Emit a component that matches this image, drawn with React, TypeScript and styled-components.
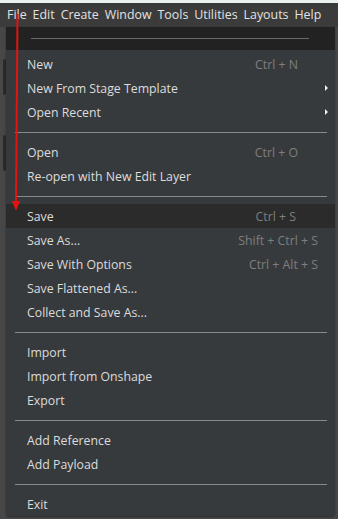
import React from "react";
import styled, { createGlobalStyle } from "styled-components";

const Global = createGlobalStyle`
  html, body { margin: 0; padding: 0; background: #3e3e3e; }
  body { font-family: "Open Sans", "Noto Sans", sans-serif; }
`;

const Screen = styled.div`
  position: relative;
  width: 338px;
  height: 519px;
  overflow: hidden;
  background: #454545;
  display: flex;
  flex-direction: column;
`;

const TopStrip = styled.div`
  height: 3px;
  background: #e9f1f1;
`;

const MenuBar = styled.div`
  height: 24px;
  background: #3b3b3b;
  display: flex;
  align-items: center;
  padding-left: 7px;
  gap: 6px;
  font-size: 12.4px;
  color: #e2e2e2;
`;

const BarItem = styled.span`
  line-height: 24px;
`;

const Workspace = styled.div`
  flex: 1;
  display: flex;
  background: #474747;
`;

const Gutter = styled.div`
  width: 6px;
  display: flex;
  flex-direction: column;
  gap: 40px;
  padding-top: 32px;
  align-items: flex-end;
`;

const Grip = styled.div`
  width: 3px;
  height: 36px;
  border-radius: 2px;
  background: #2a2a2a;
`;

const Popup = styled.div`
  position: absolute;
  left: 6px;
  top: 27px;
  width: 329px;
  height: 489px;
  background: #373a3d;
  border-radius: 0 0 4px 4px;
  display: flex;
  flex-direction: column;
  font-size: 12.3px;
  color: #dcdcdc;
  box-shadow: 0 1px 2px rgba(0, 0, 0, 0.4);
`;

const TearOff = styled.div`
  height: 23px;
  background: #222222;
  display: flex;
  align-items: center;
  padding: 0 26px 0 25px;
  &::after {
    content: "";
    flex: 1;
    height: 1px;
    background: #6a6a6a;
  }
`;

const Items = styled.div`
  display: flex;
  flex-direction: column;
  padding-top: 2px;
`;

const Row = styled.div<{ $active?: boolean }>`
  height: 24px;
  display: flex;
  align-items: center;
  padding-left: 21px;
  background: ${(p) => (p.$active ? "#2b2b2b" : "transparent")};
`;

const Label = styled.span`
  flex: 1;
  white-space: nowrap;
`;

const Shortcut = styled.span<{ $right: number }>`
  color: #7e7e7e;
  padding-right: ${(p) => p.$right}px;
  white-space: nowrap;
`;

const Arrow = styled.span`
  width: 0;
  height: 0;
  border-top: 3px solid transparent;
  border-bottom: 3px solid transparent;
  border-left: 3px solid #f0f0f0;
  margin-right: 7px;
`;

const Separator = styled.div`
  height: 16px;
  display: flex;
  align-items: center;
  padding: 0 8px 0 9px;
  &::after {
    content: "";
    flex: 1;
    height: 1px;
    background: #8a8a8a;
  }
`;

const Annotation = styled.svg`
  position: absolute;
  left: 0;
  top: 0;
  pointer-events: none;
`;

type Entry =
  | { kind: "item"; label: string; shortcut?: string; right?: number; sub?: boolean; active?: boolean }
  | { kind: "sep" };

const entries: Entry[] = [
  { kind: "item", label: "New", shortcut: "Ctrl + N", right: 37 },
  { kind: "item", label: "New From Stage Template", sub: true },
  { kind: "item", label: "Open Recent", sub: true },
  { kind: "sep" },
  { kind: "item", label: "Open", shortcut: "Ctrl + O", right: 37 },
  { kind: "item", label: "Re-open with New Edit Layer" },
  { kind: "sep" },
  { kind: "item", label: "Save", shortcut: "Ctrl + S", right: 39, active: true },
  { kind: "item", label: "Save As...", shortcut: "Shift + Ctrl + S", right: 17 },
  { kind: "item", label: "Save With Options", shortcut: "Ctrl + Alt + S", right: 17 },
  { kind: "item", label: "Save Flattened As..." },
  { kind: "item", label: "Collect and Save As..." },
  { kind: "sep" },
  { kind: "item", label: "Import" },
  { kind: "item", label: "Import from Onshape" },
  { kind: "item", label: "Export" },
  { kind: "sep" },
  { kind: "item", label: "Add Reference" },
  { kind: "item", label: "Add Payload" },
  { kind: "sep" },
  { kind: "item", label: "Exit" },
];

const menus = ["File", "Edit", "Create", "Window", "Tools", "Utilities", "Layouts", "Help"];

export default function App() {
  return (
    <>
      <Global />
      <Screen>
        <TopStrip />
        <MenuBar>
          {menus.map((m) => (
            <BarItem key={m}>{m}</BarItem>
          ))}
        </MenuBar>
        <Workspace>
          <Gutter>
            <Grip />
            <Grip />
          </Gutter>
        </Workspace>
        <Popup>
          <TearOff />
          <Items>
            {entries.map((e, i) =>
              e.kind === "sep" ? (
                <Separator key={i} />
              ) : (
                <Row key={i} $active={e.active}>
                  <Label>{e.label}</Label>
                  {e.shortcut && <Shortcut $right={e.right ?? 17}>{e.shortcut}</Shortcut>}
                  {e.sub && <Arrow />}
                </Row>
              )
            )}
          </Items>
        </Popup>
        <Annotation width="338" height="519" viewBox="0 0 338 519">
          <line x1="17.5" y1="14" x2="16" y2="203" stroke="#e3140f" strokeWidth="2" />
          <polygon points="12,201 20,201 16,211" fill="#e3140f" />
        </Annotation>
      </Screen>
    </>
  );
}
